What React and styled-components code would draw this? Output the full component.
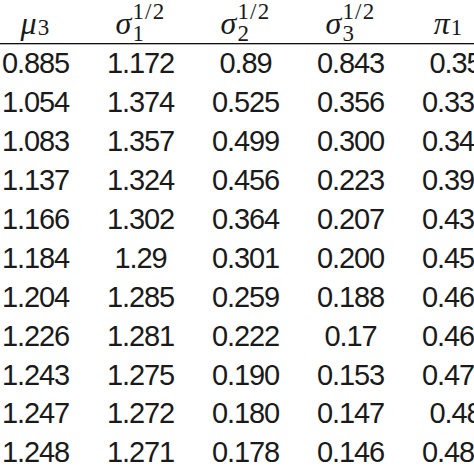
import React from 'react';
import styled, { createGlobalStyle } from 'styled-components';

const GlobalStyle = createGlobalStyle`
    html, body {
        margin: 0;
        padding: 0;
        background: #ffffff;
        overflow: hidden;
    }
`;

const Page = styled.div`
    width: 474px;
    height: 474px;
    overflow: hidden;
    background: #ffffff;
    color: #1a1a1a;
`;

const Table = styled.div`
    display: grid;
    grid-template-columns: repeat(5, 105px);
    width: 525px;
    margin-left: -17px;
`;

const HeadCell = styled.div`
    display: flex;
    justify-content: center;
    align-items: flex-start;
    height: 43px;
    padding-right: ${p => p.$shift || 0}px;
    border-bottom: 1px solid #111111;
    box-shadow: 0 1px 0 rgba(0, 0, 0, 0.3);
    font-family: "Liberation Serif", "DejaVu Serif", serif;
`;

const Sym = styled.span`
    font-style: italic;
    font-size: 32px;
    line-height: 30px;
    margin-top: 7.5px;
`;

const Scripts = styled.span`
    display: flex;
    flex-direction: column;
    align-items: flex-start;
    font-size: 23px;
    line-height: 22px;
    letter-spacing: 1.2px;
    margin-top: ${p => p.$top || 1}px;
    margin-left: 1px;
`;

const Cell = styled.div`
    text-align: center;
    height: 38.94px;
    font-family: "Liberation Sans", Arial, sans-serif;
    font-size: 29px;
    line-height: 38.94px;
    letter-spacing: -1.1px;
    white-space: nowrap;
`;

const rows = [
    ['0.885', '1.172', '0.89', '0.843', '0.35'],
    ['1.054', '1.374', '0.525', '0.356', '0.331'],
    ['1.083', '1.357', '0.499', '0.300', '0.342'],
    ['1.137', '1.324', '0.456', '0.223', '0.391'],
    ['1.166', '1.302', '0.364', '0.207', '0.432'],
    ['1.184', '1.29', '0.301', '0.200', '0.454'],
    ['1.204', '1.285', '0.259', '0.188', '0.463'],
    ['1.226', '1.281', '0.222', '0.17', '0.468'],
    ['1.243', '1.275', '0.190', '0.153', '0.473'],
    ['1.247', '1.272', '0.180', '0.147', '0.48'],
    ['1.248', '1.271', '0.178', '0.146', '0.481'],
];

const App = () => {
    return (
        <Page>
            <GlobalStyle />
            <Table>
                <HeadCell>
                    <Sym>μ</Sym>
                    <Scripts $top={17}><span>3</span></Scripts>
                </HeadCell>
                <HeadCell>
                    <Sym>σ</Sym>
                    <Scripts><span>1/2</span><span>1</span></Scripts>
                </HeadCell>
                <HeadCell>
                    <Sym>σ</Sym>
                    <Scripts><span>1/2</span><span>2</span></Scripts>
                </HeadCell>
                <HeadCell>
                    <Sym>σ</Sym>
                    <Scripts><span>1/2</span><span>3</span></Scripts>
                </HeadCell>
                <HeadCell $shift={14}>
                    <Sym>π</Sym>
                    <Scripts $top={17}><span>1</span></Scripts>
                </HeadCell>
                {rows.map((row, i) =>
                    row.map((value, j) => <Cell key={`${i}-${j}`}>{value}</Cell>)
                )}
            </Table>
        </Page>
    );
};

export default App;
